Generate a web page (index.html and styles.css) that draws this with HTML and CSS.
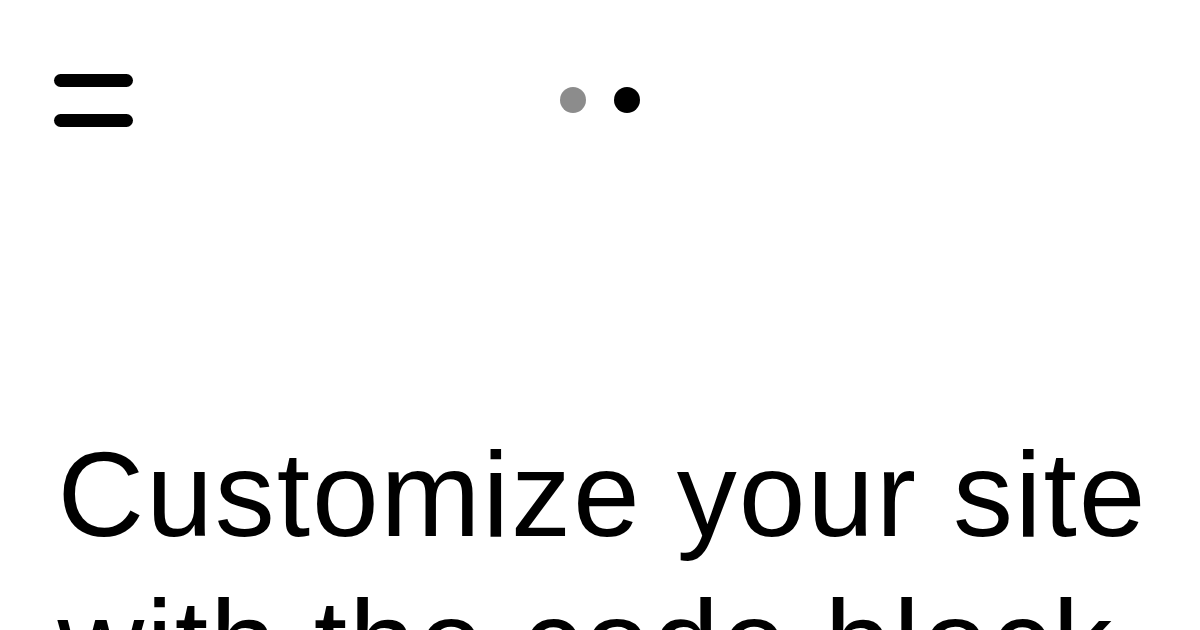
FILE: index.html
```html
<!DOCTYPE html>
<html lang="en">
<head>
<meta charset="utf-8">
<title>Customize your site</title>
<link rel="stylesheet" href="styles.css">
</head>
<body>
<header class="site-header">
  <div class="header-left">
    <button class="menu-btn" aria-label="Menu">
      <span class="menu-line"></span>
      <span class="menu-line"></span>
    </button>
  </div>
  <div class="brand-dots">
    <span class="dot dot-gray"></span>
    <span class="dot dot-black"></span>
  </div>
  <div class="header-right"></div>
</header>
<main class="hero">
  <h1 class="hero-title">Customize your site with the code block</h1>
</main>
</body>
</html>
```
FILE: styles.css
```css
html, body {
  margin: 0;
  padding: 0;
  background: #ffffff;
  color: #000000;
  font-family: "Liberation Sans", Arial, sans-serif;
}

.site-header {
  display: grid;
  grid-template-columns: 1fr auto 1fr;
  align-items: center;
  height: 200px;
  padding: 0 54px;
}

.menu-btn {
  display: flex;
  flex-direction: column;
  gap: 27px;
  padding: 0;
  margin: 0;
  border: 0;
  background: none;
  cursor: pointer;
}

.menu-line {
  display: block;
  width: 79px;
  height: 13px;
  border-radius: 7px;
  background: #000;
}

.brand-dots {
  display: flex;
  align-items: center;
  gap: 28px;
}

.dot {
  display: block;
  width: 26px;
  height: 26px;
  border-radius: 50%;
}

.dot-gray { background: #8c8c8c; }
.dot-black { background: #000; }

.hero {
  padding: 220px 24px 0 57.6px;
}

.hero-title {
  margin: 0;
  font-size: 120px;
  font-weight: 400;
  line-height: 148px;
  letter-spacing: 1.9px;
}
```
